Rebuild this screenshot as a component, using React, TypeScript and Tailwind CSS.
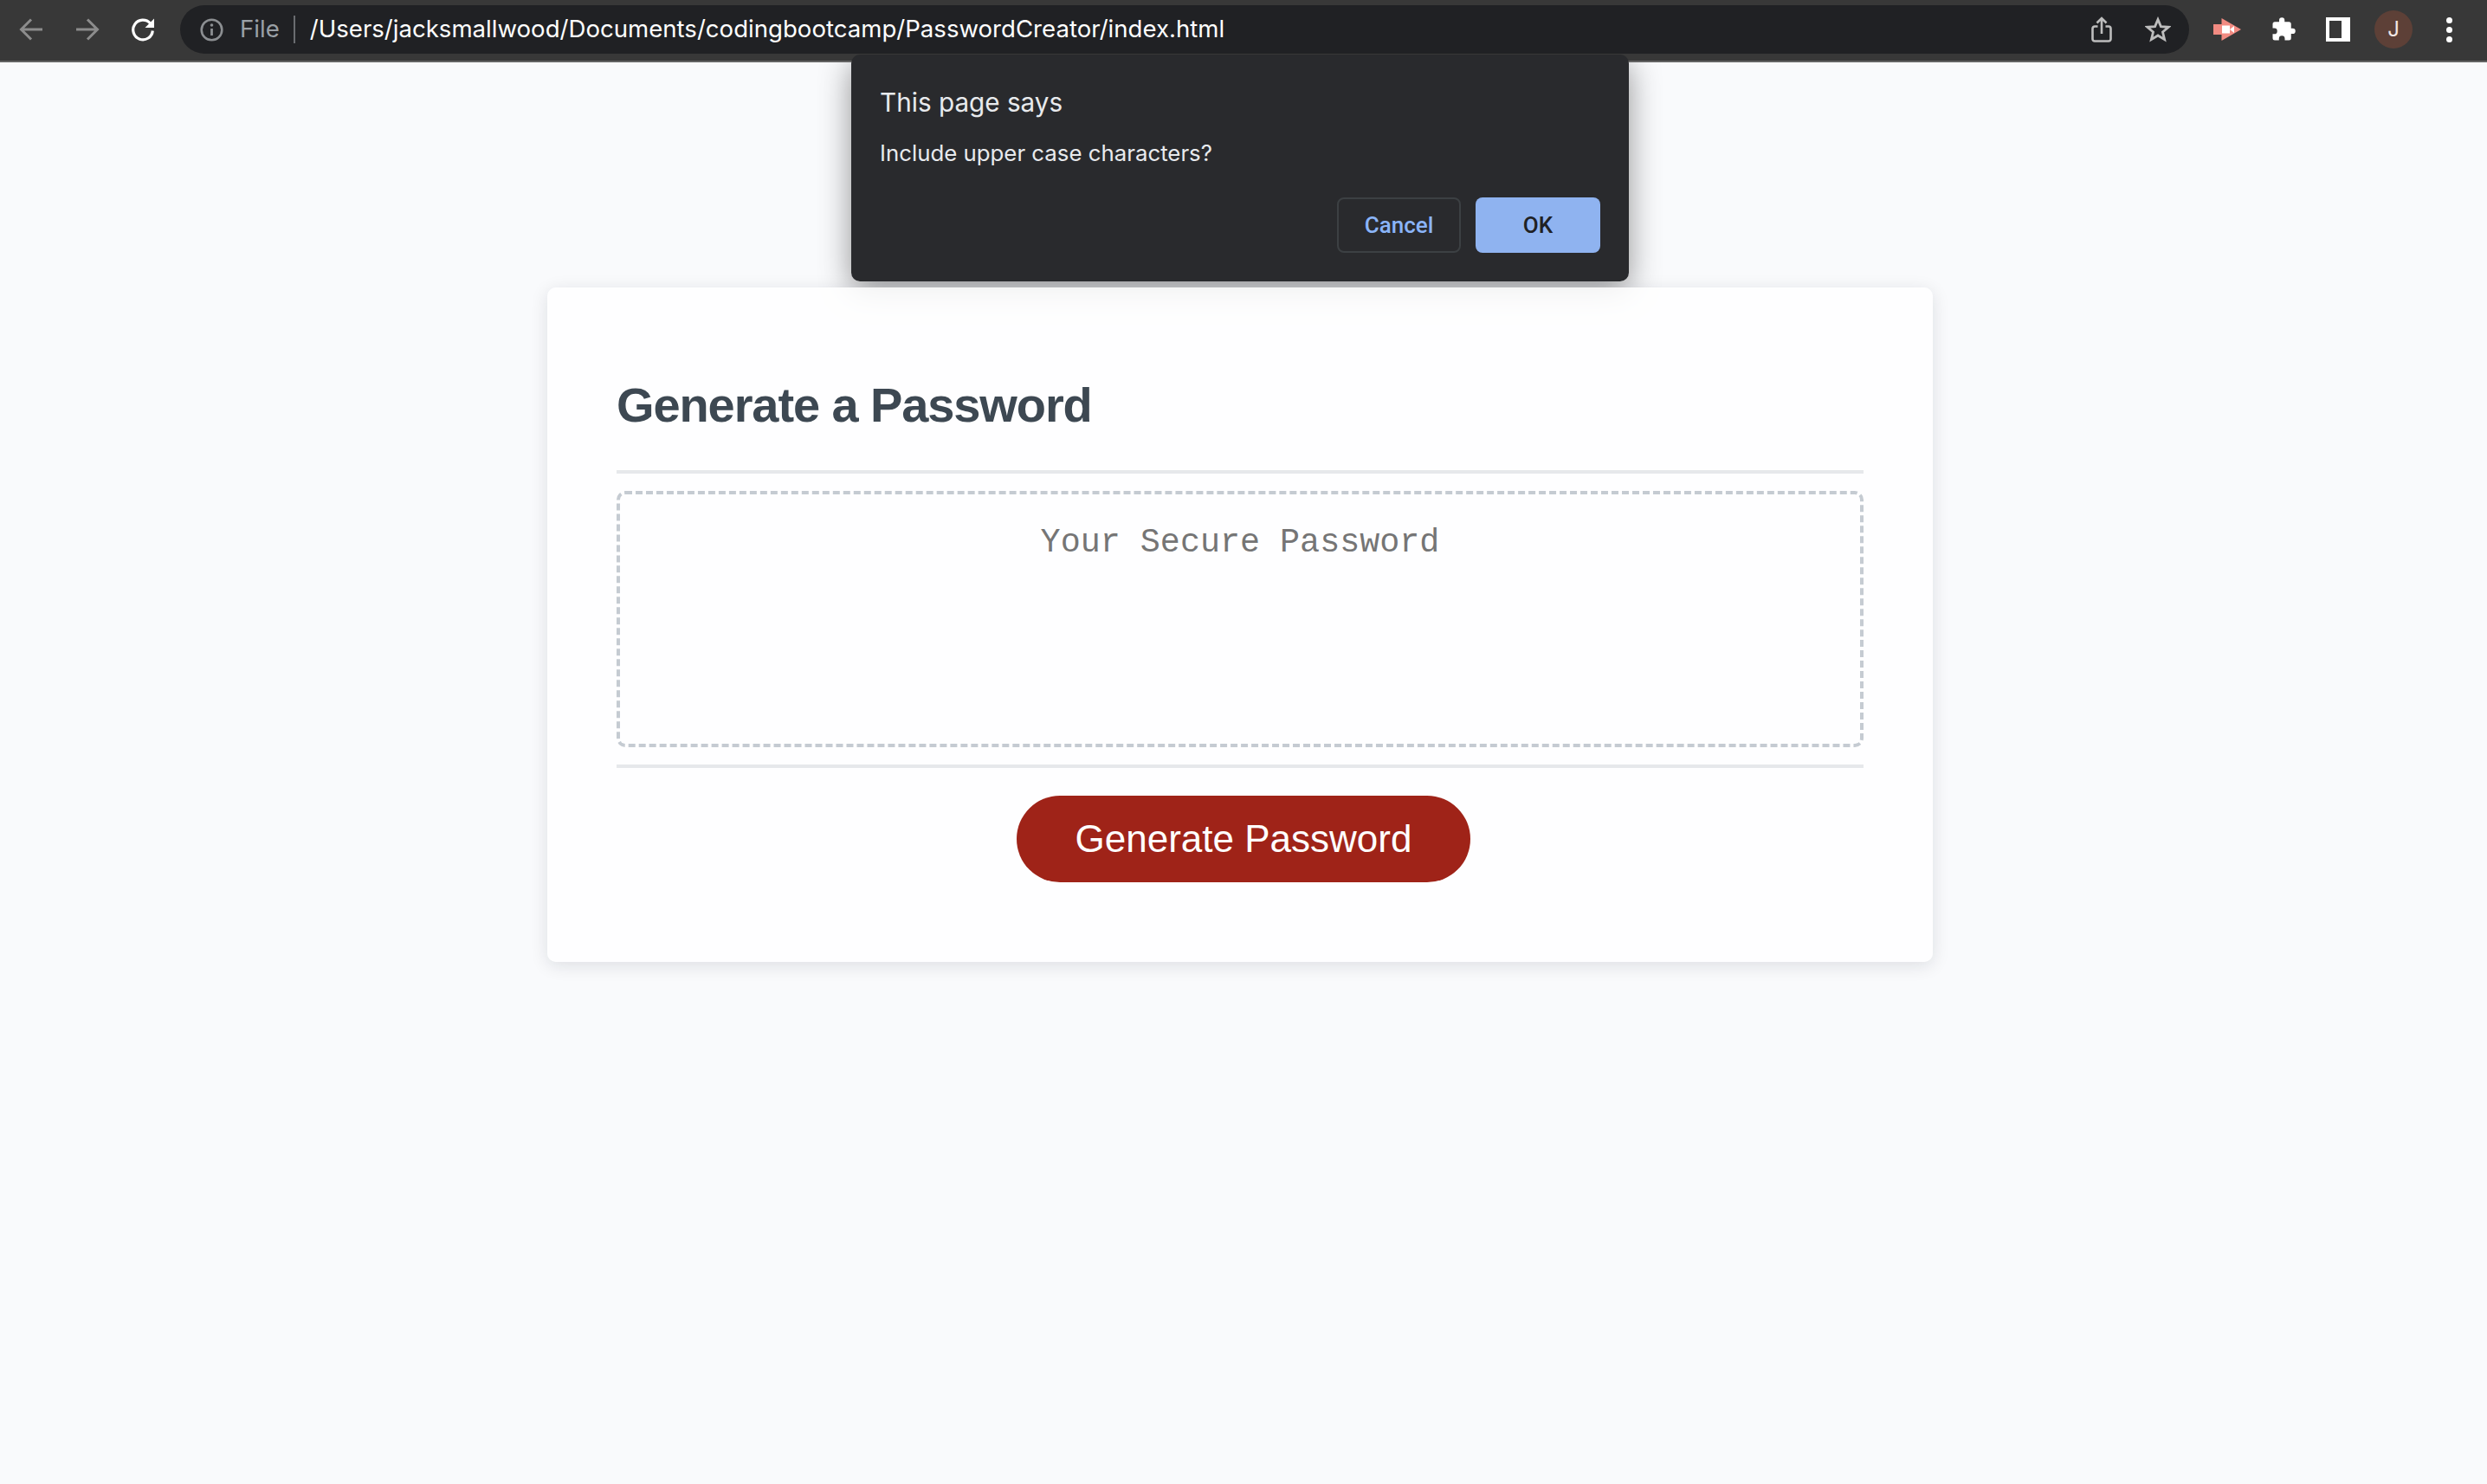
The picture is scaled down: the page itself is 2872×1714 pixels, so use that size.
export default function App() {
  return (
    <div className="relative min-h-[1714px] w-[2872px] overflow-hidden bg-[#f9fafc] font-['Liberation_Sans',sans-serif]">
      <header className="relative z-30 box-content flex h-[68px] items-center border-b-2 border-[#636363] bg-[#383838] pb-[2px]">
        <svg className="ml-[22px] h-[26px] w-[28px]" viewBox="0 0 28 26" fill="none" stroke="#8c8c8c" strokeWidth="3">
          <path d="M27 13H3M14 1.5 2.5 13 14 24.5" />
        </svg>
        <svg className="ml-[37px] h-[26px] w-[28px]" viewBox="0 0 28 26" fill="none" stroke="#8c8c8c" strokeWidth="3">
          <path d="M1 13h24M14 1.5 25.5 13 14 24.5" />
        </svg>
        <svg className="ml-[36px] h-[28px] w-[28px]" viewBox="0 0 28 28" fill="none">
          <path d="M22.5 7A11.3 11.3 0 1 0 25.3 15.5" stroke="#fff" strokeWidth="3.2" />
          <path d="M27 1.5V12H16.5Z" fill="#fff" />
        </svg>
        <div className="ml-[29px] flex h-[56px] w-[2320px] items-center rounded-full bg-[#202124]">
          <svg className="ml-[23px] h-[27px] w-[27px]" viewBox="0 0 27 27" fill="none">
            <circle cx="13.5" cy="13.5" r="11.8" stroke="#8c8f92" strokeWidth="2.6" />
            <path d="M13.5 12v8" stroke="#8c8f92" strokeWidth="2.8" />
            <circle cx="13.5" cy="8" r="1.8" fill="#8c8f92" />
          </svg>
          <span className="ml-[19px] font-['Inter',sans-serif] text-[27.6px] leading-none text-[#9aa0a6]">File</span>
          <span className="ml-[16px] h-[32px] w-[2px] bg-[#6a6c70]" />
          <span className="ml-[17px] font-['Inter',sans-serif] text-[27.6px] leading-none text-white">/Users/jacksmallwood/Documents/codingbootcamp/PasswordCreator/index.html</span>
          <svg className="ml-auto h-[30px] w-[24px]" viewBox="0 0 24 30" fill="none" stroke="#bdbdbd" strokeWidth="2.6">
            <path d="M7.5 11.5H4A2.5 2.5 0 0 0 1.5 14v12A2.5 2.5 0 0 0 4 28.5h16a2.5 2.5 0 0 0 2.5-2.5V14a2.5 2.5 0 0 0-2.5-2.5h-3.5" />
            <path d="M12 20V2.5M6.5 7.5 12 2l5.5 5.5" />
          </svg>
          <svg className="ml-[38px] mr-[21px] h-[30px] w-[30px]" viewBox="0 0 30 30" fill="none" stroke="#bdbdbd" strokeWidth="2.8">
            <path d="M15 3.5 18.4 11.6 27.2 12.3 20.5 18 22.6 26.6 15 22 7.4 26.6 9.5 18 2.8 12.3 11.6 11.6Z" />
          </svg>
        </div>
        <svg className="ml-[28px] h-[28px] w-[32px]" viewBox="0 0 32 28">
          <path d="M9.5 1 32 14 9.5 27Z" fill="#f28b82" />
          <path d="M0 8h16v12H0Z" fill="#f28b82" />
          <path d="M10 9.5h9v9h-9ZM19 14l5-4v8Z" fill="#fff" />
        </svg>
        <svg className="ml-[34px] h-[30px] w-[30px]" viewBox="0 0 24 24" fill="#fff">
          <path d="M20.5 11H19V7a2 2 0 0 0-2-2h-4V3.5a2.5 2.5 0 0 0-5 0V5H4a2 2 0 0 0-2 2v3.8h1.5a2.7 2.7 0 0 1 0 5.4H2V20a2 2 0 0 0 2 2h3.8v-1.5a2.7 2.7 0 0 1 5.4 0V22H17a2 2 0 0 0 2-2v-4h1.5a2.5 2.5 0 0 0 0-5Z" />
        </svg>
        <div className="ml-[34px] flex h-[28px] w-[28px] justify-end bg-white p-[4px]">
          <div className="h-full w-[14px] bg-[#383838]" style={{ marginRight: 6 }} />
        </div>
        <div className="ml-[28px] flex h-[44px] w-[44px] items-center justify-center rounded-full bg-[#5d4037] font-['Inter',sans-serif] text-[24px] text-[#f1e7e4]">J</div>
        <div className="ml-[39px] flex flex-col gap-[4px]">
          <span className="h-[7px] w-[7px] rounded-full bg-white" />
          <span className="h-[7px] w-[7px] rounded-full bg-white" />
          <span className="h-[7px] w-[7px] rounded-full bg-white" />
        </div>
      </header>

      <div className="pointer-events-none absolute left-[983px] top-[63px] z-0 h-[262px] w-[898px] rounded-[10px] shadow-[0_10px_36px_rgba(0,0,0,0.42)]" />

      <main className="relative z-10 ml-[632px] mt-[260px] box-border h-[779px] w-[1600px] rounded-[10px] bg-white/85 px-[80px] pt-[108px] shadow-[0_4px_20px_rgba(17,24,39,0.12)]">
        <h1 className="text-[56px] font-bold leading-none tracking-[-1.1px] text-[#3d4852]">Generate a Password</h1>
        <div className="mt-[47px] h-[4px] bg-[#e6e8eb]" />
        <div className="mt-[20px] h-[296px] rounded-[10px] border-4 border-dashed border-[#c5cbd2] pt-[34px] text-center font-['Liberation_Mono',monospace] text-[38.4px] leading-[44px] text-[#757575]">
          Your Secure Password
        </div>
        <div className="mt-[20px] h-[4px] bg-[#e6e8eb]" />
        <div className="mt-[32px] flex justify-center pl-[8px]">
          <button className="h-[100px] w-[524px] rounded-full bg-[#9f2318] text-[44px] text-white">Generate Password</button>
        </div>
      </main>

      <div className="absolute left-[983px] top-[63px] z-40 h-[262px] w-[898px] rounded-[10px] bg-[#292a2d] font-['Inter',sans-serif]">
        <div className="pl-[33px] pt-[35px] text-[29.7px] leading-[40px] text-[#e8eaed]">This page says</div>
        <div className="pl-[33px] pt-[23px] text-[25.8px] leading-[32px] text-[#e8eaed]">Include upper case characters?</div>
        <div className="mr-[33px] mt-[35px] flex justify-end gap-[17px] font-['Roboto',sans-serif]">
          <button className="h-[64px] w-[143px] rounded-[8px] border-2 border-[#3c4043] text-[26px] font-medium text-[#8ab4f8]">Cancel</button>
          <button className="h-[64px] w-[144px] rounded-[8px] bg-[#8fb3f0] text-[26px] font-medium text-[#202124]">OK</button>
        </div>
      </div>
    </div>
  );
}
